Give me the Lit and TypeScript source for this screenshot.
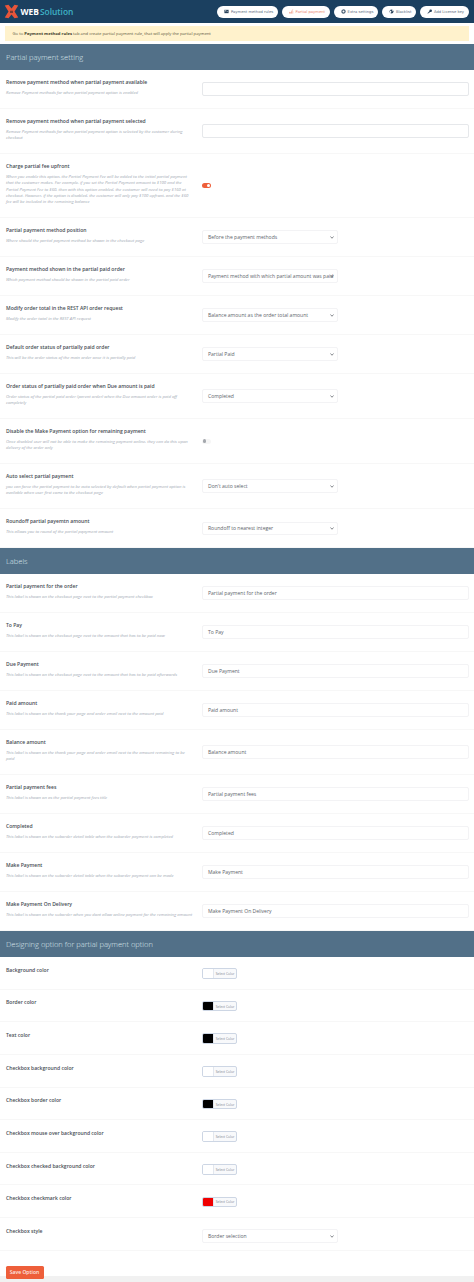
import { LitElement, html, css, svg } from "lit";
import { customElement } from "lit/decorators.js";

type Row = { t: string; d?: string; k: "text" | "sel" | "on" | "off" | "color"; v?: string; c?: string };

const s1: Row[] = [
  { t: "Remove payment method when partial payment available", d: "Remove Payment methods for when partial payment option is enabled", k: "text" },
  { t: "Remove payment method when partial payment selected", d: "Remove Payment methods for when partial payment option is selected by the customer during checkout", k: "text" },
  { t: "Charge partial fee upfront", d: "When you enable this option, the Partial Payment Fee will be added to the initial partial payment that the customer makes. For example, if you set the Partial Payment amount to $100 and the Partial Payment Fee to $60, then with this option enabled, the customer will need to pay $160 at checkout. However, if the option is disabled, the customer will only pay $100 upfront, and the $60 fee will be included in the remaining balance", k: "on" },
  { t: "Partial payment method position", d: "Where should the partial payment method be shown in the checkout page", k: "sel", v: "Before the payment methods" },
  { t: "Payment method shown in the partial paid order", d: "Which payment method should be shown in the partial paid order", k: "sel", v: "Payment method with which partial amount was paid" },
  { t: "Modify order total in the REST API order request", d: "Modify the order total in the REST API request", k: "sel", v: "Balance amount as the order total amount" },
  { t: "Default order status of partially paid order", d: "This will be the order status of the main order once it is partially paid", k: "sel", v: "Partial Paid" },
  { t: "Order status of partially paid order when Due amount is paid", d: "Order status of the partial paid order (parent order) when the Due amount order is paid off completely", k: "sel", v: "Completed" },
  { t: "Disable the Make Payment option for remaining payment", d: "Once disabled user will not be able to make the remaining payment online, they can do this upon delivery of the order only", k: "off" },
  { t: "Auto select partial payment", d: "you can force the partial payment to be auto selected by default when partial payment option is available when user first come to the checkout page", k: "sel", v: "Don't auto select" },
  { t: "Roundoff partial payemtn amount", d: "This allows you to round of the partial pqayment amount", k: "sel", v: "Roundoff to nearest integer" },
];

const s2: Row[] = [
  { t: "Partial payment for the order", d: "This label is shown on the checkout page next to the partial payment checkbox", k: "text", v: "Partial payment for the order" },
  { t: "To Pay", d: "This label is shown on the checkout page next to the amount that has to be paid now", k: "text", v: "To Pay" },
  { t: "Due Payment", d: "This label is shown on the checkout page next to the amount that has to be paid afterwords", k: "text", v: "Due Payment" },
  { t: "Paid amount", d: "This label is shown on the thank your page and order email next to the amount paid", k: "text", v: "Paid amount" },
  { t: "Balance amount", d: "This label is shown on the thank your page and order email next to the amount remaining to be paid", k: "text", v: "Balance amount" },
  { t: "Partial payment fees", d: "This label is shown on as the partial payment fees title", k: "text", v: "Partial payment fees" },
  { t: "Completed", d: "This label is shown on the suborder detail table when the suborder payment is completed", k: "text", v: "Completed" },
  { t: "Make Payment", d: "This label is shown on the suborder detail table when the suborder payment can be made", k: "text", v: "Make Payment" },
  { t: "Make Payment On Delivery", d: "This label is shown on the suborder when you dont allow online payment for the remaining amount", k: "text", v: "Make Payment On Delivery" },
];

const s3: Row[] = [
  { t: "Background color", k: "color", c: "#ffffff" },
  { t: "Border color", k: "color", c: "#000000" },
  { t: "Text color", k: "color", c: "#000000" },
  { t: "Checkbox background color", k: "color", c: "#ffffff" },
  { t: "Checkbox border color", k: "color", c: "#000000" },
  { t: "Checkbox mouse over background color", k: "color", c: "#ffffff" },
  { t: "Checkbox checked background color", k: "color", c: "#ffffff" },
  { t: "Checkbox checkmark color", k: "color", c: "#f00000" },
  { t: "Checkbox style", k: "sel", v: "Border selection" },
];

const navIcons = [
  svg`<rect x="1" y="2" width="10" height="8" fill="#27415a"/><rect x="2.5" y="3.5" width="3" height="2" fill="#fff"/><rect x="6.5" y="6" width="3" height="1" fill="#fff"/>`,
  svg`<path d="M1 11 L1 7 L4 10 L9 1 M3 11 L3 9 M6 11 L6 7 M9 11 L9 5" stroke="#e9866e" stroke-width="1.2" fill="none"/>`,
  svg`<circle cx="6" cy="6" r="3.4" fill="none" stroke="#27415a" stroke-width="2.4"/><circle cx="6" cy="6" r="5.2" fill="none" stroke="#27415a" stroke-width="1.4" stroke-dasharray="1.6 1.4"/>`,
  svg`<circle cx="6" cy="6" r="4.8" fill="#27415a"/><path d="M2 3 L6 6 L4 10 L2 8Z M7 2 L10 4 L8 6Z" fill="#fff"/>`,
  svg`<path d="M2 11 L1 10 L6 5 A3 3 0 1 1 8 7 L7 7 L7 8 L6 8 L6 9 L4 9 L3 11Z" fill="#27415a"/>`,
];
const nav = [
  ["Payment method rules", false],
  ["Partial payment", true],
  ["Extra settings", false],
  ["Blacklist", false],
  ["Add License key", false],
] as const;

@customElement("app-root")
export class AppRoot extends LitElement {
  static styles = css`
    :host { display: block; width: 474px; height: 1282px; overflow: hidden; background: #fff; font-family: "Open Sans", sans-serif; color: #3c434a; }
    .top { display: flex; align-items: center; justify-content: space-between; height: 23px; padding: 0 5px 0 4px; background: #1b4060; }
    .logo { display: flex; align-items: center; gap: 1.5px; font-family: "Open Sans", sans-serif; font-size: 8.4px; font-weight: 700; color: #fff; }
    .logo b { font-weight: 600; color: #3fb3c6; margin-left: 1px; }
    .logo svg { width: 15px; height: 15px; display: block; }
    .nav { display: flex; gap: 3.5px; }
    .nb { display: flex; align-items: center; gap: 2px; height: 12px; padding: 0 5px 0 7px; border-radius: 6px; background: #fff; font-family: "DejaVu Sans", sans-serif; font-size: 3.72px; color: #5a6c7e; white-space: nowrap; }
    .nb.act { color: #e9866e; }
    .nb svg { width: 5px; height: 5px; flex: none; }
    .notice { margin: 3px 5px 3px 5px; height: 15px; display: flex; align-items: center; padding-left: 7.5px; background: #fff2cc; font-size: 4.2px; color: #5b5640; }
    .notice b { font-weight: 700; color: #3c3a2a; }
    .sec { height: 26px; display: flex; align-items: center; padding-left: 6px; background: #527088; color: #dfe8ee; font-size: 7.5px; font-weight: 300; }
    .row { display: grid; grid-template-columns: 196px 1fr; align-items: center; padding: 8px 5px 12.75px 6px; border-bottom: 1px solid #f7f7f7; }
    .t { font-size: 5.05px; font-weight: 600; line-height: 8.5px; color: #484e55; }
    .d { margin-top: 2.5px; max-width: 186.5px; font-size: 4.25px; line-height: 6.2px; font-style: italic; color: #a2a9b3; }
    .ctl { display: flex; align-items: center; padding-top: 2.5px; margin-bottom: -2.5px; }
    .inp, .sel { box-sizing: border-box; height: 13.5px; display: flex; align-items: center; padding: 0 0 0 5px; border: 1px solid #f3f3f5; border-radius: 2px; background: #fff; font-size: 5.05px; color: #5d646b; white-space: nowrap; overflow: hidden; }
    .inp { width: 267px; }
    .inp.empty { border-color: #e6e8eb; }
    .sel { width: 136px; position: relative; }
    .sel svg { position: absolute; right: 3px; top: 4.5px; width: 4px; height: 3px; }
    .tg { width: 9px; height: 5px; border-radius: 3px; background: #ee5f3a; position: relative; }
    .tg i { position: absolute; right: 0.8px; top: 0.8px; width: 3.4px; height: 3.4px; border-radius: 50%; background: #fff; }
    .tg.off { background: #f6f6f6; }
    .tg.off i { left: 0.5px; right: auto; background: #a4a8ad; }
    .row.colrow { align-items: start; padding: 8.75px 5px 0 6px; height: 32.67px; box-sizing: border-box; }
    .colrow .ctl { padding-top: 2.5px; margin-bottom: 0; }
    .colbtn { box-sizing: border-box; width: 35px; height: 10.5px; display: flex; border: 1px solid #cdd6e4; border-radius: 2px; overflow: hidden; background: #f8f9fb; }
    .colbtn i { width: 10px; flex: none; }
    .colbtn span { flex: 1; display: flex; align-items: center; justify-content: center; font-size: 3.4px; color: #7d8590; border-left: 1px solid #e3e7ee; }
    .foot { padding: 6.7px 0 0 5.5px; height: 18.3px; }
    .save { display: inline-flex; align-items: center; justify-content: center; width: 38px; height: 12.5px; border-radius: 1.5px; background: #ee5f3a; color: #fde9e2; font-size: 5.05px; font-weight: 600; }
    .bot { height: 7px; background: #f1f1f1; }
  `;

  ctl(r: Row) {
    if (r.k === "text") return html`<div class="inp ${r.v ? "" : "empty"}">${r.v ?? ""}</div>`;
    if (r.k === "sel")
      return html`<div class="sel">${r.v}<svg viewBox="0 0 8 6"><path d="M1 1 L4 4.5 L7 1" fill="none" stroke="#50575e" stroke-width="1.4"/></svg></div>`;
    if (r.k === "on") return html`<div class="tg"><i></i></div>`;
    if (r.k === "off") return html`<div class="tg off"><i></i></div>`;
    return html`<div class="colbtn"><i style="background:${r.c}"></i><span>Select Color</span></div>`;
  }

  row(r: Row) {
    return html`<div class="row ${r.d ? "" : "colrow"}">
      <div><div class="t">${r.t}</div>${r.d ? html`<div class="d">${r.d}</div>` : ""}</div>
      <div class="ctl">${this.ctl(r)}</div>
    </div>`;
  }

  render() {
    return html`
      <div class="top">
        <div class="logo">
          <svg viewBox="0 0 20 20"><path d="M1 2 L6 1 L10 6 L14 1 L19 2 L14 10 L19 18 L14 19 L10 14 L6 19 L1 18 L6 10Z" fill="#e8553a"/><path d="M8 9 L12 9 L12 12 L8 12Z" fill="#7a3a34"/></svg>
          <span>WEB<b>Solution</b></span>
        </div>
        <div class="nav">
          ${nav.map(([l, a], i) => html`<div class="nb ${a ? "act" : ""}"><svg viewBox="0 0 12 12">${navIcons[i]}</svg>${l}</div>`)}
        </div>
      </div>
      <div class="notice"><span>Go to <b>Payment method rules</b> tab and create partial payment rule, that will apply the partial payment</span></div>
      <div class="sec">Partial payment setting</div>
      ${s1.map((r) => this.row(r))}
      <div class="sec">Labels</div>
      ${s2.map((r) => this.row(r))}
      <div class="sec">Designing option for partial payment option</div>
      ${s3.map((r) => this.row(r))}
      <div class="foot"><div class="save">Save Option</div></div>
      <div class="bot"></div>
    `;
  }
}
